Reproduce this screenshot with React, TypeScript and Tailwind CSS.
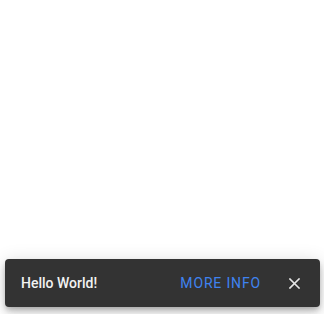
export default function App() {
  return (
    <div className="flex h-[314px] w-[324px] flex-col justify-end bg-white" style={{ fontFamily: 'Roboto, "Liberation Sans", sans-serif' }}>
      <div className="mb-[7px] ml-[5px] mr-[4px] flex h-[48px] items-center rounded-[4px] bg-[#333333] pl-[16px] pr-[16px] shadow-[0_3px_5px_-1px_rgba(0,0,0,0.2),0_6px_10px_0_rgba(0,0,0,0.14),0_1px_18px_0_rgba(0,0,0,0.12)]">
        <span className="flex-1 text-[14px] font-medium text-[#f2f2f2]">Hello World!</span>
        <button className="mr-[23px] text-[14px] tracking-[0.06em] text-[#3f83f0]">MORE INFO</button>
        <button className="flex h-[20px] w-[20px] items-center justify-center text-[#e6e6e6]">
          <svg width="11" height="11" viewBox="0 0 11 11" fill="none" stroke="currentColor" strokeWidth="1.6" strokeLinecap="square">
            <path d="M1 1L10 10M10 1L1 10" />
          </svg>
        </button>
      </div>
    </div>
  );
}
